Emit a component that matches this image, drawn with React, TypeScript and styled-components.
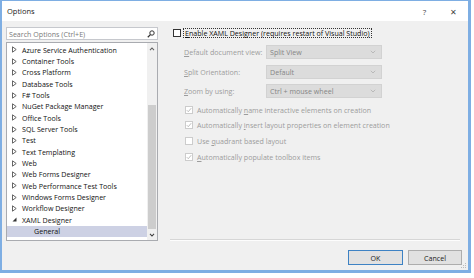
import React from "react";
import styled, { createGlobalStyle } from "styled-components";

const GlobalStyle = createGlobalStyle`
  html, body {
    margin: 0;
    padding: 0;
    background: #ffffff;
  }
  body {
    font-family: "Open Sans", "Noto Sans", "Liberation Sans", sans-serif;
    font-size: 7.1px;
    color: #111;
  }
`;

const Window = styled.div`
  box-sizing: border-box;
  width: 471px;
  height: 273px;
  border-style: solid;
  border-color: #7eaee3;
  border-width: 1px 3px 3px 2px;
  display: flex;
  flex-direction: column;
  position: relative;
`;

const TitleBar = styled.div`
  height: 20px;
  background: #ffffff;
  display: flex;
  align-items: center;
  padding-left: 5px;
  font-size: 7.5px;
  color: #222;
`;

const TitleText = styled.span`
  flex: 1;
`;

const TitleButton = styled.span`
  width: 29px;
  text-align: center;
  font-size: 8px;
  color: #444;
`;

const Body = styled.div`
  flex: 1;
  background: #f0f0f0;
  display: flex;
  flex-direction: column;
`;

const Main = styled.div`
  display: flex;
  padding: 6px 0 0 4px;
`;

const LeftPane = styled.div`
  width: 152px;
  display: flex;
  flex-direction: column;
  gap: 2px;
`;

const SearchBox = styled.div`
  box-sizing: border-box;
  height: 13px;
  background: #fff;
  border: 1px solid #c6c8cd;
  display: flex;
  align-items: center;
  padding: 0 2px 0 2px;
  color: #7a7a7a;
`;

const SearchPlaceholder = styled.span`
  flex: 1;
`;

const TreeBox = styled.div`
  box-sizing: border-box;
  height: 199px;
  background: #fff;
  border: 1px solid #a9abb0;
  display: flex;
`;

const TreeList = styled.div`
  flex: 1;
  padding-top: 1px;
`;

const TreeRow = styled.div<{ $selected?: boolean; $indent?: number }>`
  height: 11.35px;
  display: flex;
  align-items: center;
  padding-left: ${(p) => 5 + (p.$indent || 0) * 12}px;
  background: ${(p) => (p.$selected ? "#cdd1e4" : "transparent")};
  white-space: nowrap;
`;

const Expander = styled.span`
  width: 10px;
  display: flex;
  align-items: center;
`;

const ScrollBar = styled.div`
  width: 10px;
  background: #f0f0f0;
  display: flex;
  flex-direction: column;
  align-items: center;
`;

const ScrollArrow = styled.div`
  height: 11px;
  display: flex;
  align-items: center;
  justify-content: center;
`;

const ScrollTrack = styled.div`
  flex: 1;
  width: 100%;
  display: flex;
  flex-direction: column;
  padding-top: 51px;
  box-sizing: border-box;
`;

const ScrollThumb = styled.div`
  width: 8px;
  margin: 0 auto;
  height: 124px;
  background: #cdcdcd;
`;

const RightPane = styled.div`
  width: 290px;
  margin-left: 12px;
  height: 213px;
  border-bottom: 1px solid #d6d6d6;
  box-shadow: 0 1px 0 #fdfdfd;
  padding: 1px 0 0 3px;
  box-sizing: border-box;
`;

const EnableRow = styled.div`
  display: flex;
  align-items: center;
  height: 10px;
  gap: 2px;
`;

const FocusLabel = styled.span`
  border: 1px dotted #333;
  padding: 0 1px;
  height: 10px;
  box-sizing: border-box;
  display: flex;
  align-items: center;
  color: #111;
`;

const Settings = styled.div`
  padding-left: 11px;
  margin-top: 7px;
  display: flex;
  flex-direction: column;
`;

const FieldRow = styled.div`
  display: flex;
  align-items: center;
  height: 14px;
  margin-bottom: 5.5px;
`;

const FieldLabel = styled.span`
  width: 82px;
  color: #9c9c9c;
`;

const Select = styled.div`
  box-sizing: border-box;
  width: 116px;
  height: 14px;
  background: #dcdcdc;
  border: 1px solid #d2d2d2;
  display: flex;
  align-items: center;
  justify-content: space-between;
  padding: 0 5px 0 3px;
  color: #858585;
`;

const CheckRow = styled.div`
  display: flex;
  align-items: center;
  height: 12px;
  margin-bottom: 3.7px;
  padding-left: 1px;
  gap: 4px;
  color: #9c9c9c;
`;

const Box = styled.span<{ $disabled?: boolean }>`
  box-sizing: border-box;
  width: 8px;
  height: 8px;
  border: 1px solid ${(p) => (p.$disabled ? "#cccccc" : "#333333")};
  background: #fff;
  display: flex;
  align-items: center;
  justify-content: center;
`;

const U = styled.span`
  text-decoration: underline;
`;

const Footer = styled.div`
  display: flex;
  justify-content: flex-end;
  gap: 5px;
  padding: 9px 6px 0 0;
`;

const Button = styled.div<{ $default?: boolean }>`
  box-sizing: border-box;
  height: 15px;
  width: ${(p) => (p.$default ? 55 : 54)}px;
  background: #e1e1e1;
  border: 1px solid ${(p) => (p.$default ? "#3d82c4" : "#adadad")};
  display: flex;
  align-items: center;
  justify-content: center;
  color: #1a1a1a;
`;

const Grip = styled.div`
  position: absolute;
  right: 1px;
  bottom: 1px;
  display: flex;
`;

const treeItems = [
  "Azure Service Authentication",
  "Container Tools",
  "Cross Platform",
  "Database Tools",
  "F# Tools",
  "NuGet Package Manager",
  "Office Tools",
  "SQL Server Tools",
  "Test",
  "Text Templating",
  "Web",
  "Web Forms Designer",
  "Web Performance Test Tools",
  "Windows Forms Designer",
  "Workflow Designer",
];

const Collapsed = () => (
  <svg width="5" height="7" viewBox="0 0 5 7">
    <path d="M0.5 0.8 L4.2 3.5 L0.5 6.2 Z" fill="none" stroke="#555" strokeWidth="0.9" />
  </svg>
);

const Expanded = () => (
  <svg width="5" height="5" viewBox="0 0 5 5">
    <path d="M4.5 0.5 L4.5 4.5 L0.5 4.5 Z" fill="#333" />
  </svg>
);

const Check = () => (
  <svg width="6" height="6" viewBox="0 0 6 6">
    <path d="M0.8 3.2 L2.3 4.7 L5.2 1.2" fill="none" stroke="#b5b5b5" strokeWidth="0.9" />
  </svg>
);

const Chevron = ({ up }: { up?: boolean }) => (
  <svg width="6" height="4" viewBox="0 0 6 4">
    <path
      d={up ? "M1 3.2 L3 1 L5 3.2" : "M1 0.8 L3 3 L5 0.8"}
      fill="none"
      stroke={up ? "#606060" : "#404040"}
      strokeWidth="1.1"
    />
  </svg>
);

const DropArrow = () => (
  <svg width="6" height="4" viewBox="0 0 6 4">
    <path d="M0.8 0.8 L3 3 L5.2 0.8" fill="none" stroke="#b0b0b0" strokeWidth="0.8" />
  </svg>
);

const SearchIcon = () => (
  <svg width="8" height="8" viewBox="0 0 8 8">
    <circle cx="5" cy="3" r="2.2" fill="none" stroke="#333" strokeWidth="1" />
    <path d="M3.4 4.6 L0.8 7.2" stroke="#333" strokeWidth="1.3" />
  </svg>
);

const GripDots = () => (
  <svg width="6" height="6" viewBox="0 0 6 6">
    <rect x="4" y="0" width="1" height="1" fill="#bbb" />
    <rect x="2" y="2" width="1" height="1" fill="#bbb" />
    <rect x="4" y="2" width="1" height="1" fill="#bbb" />
    <rect x="0" y="4" width="1" height="1" fill="#bbb" />
    <rect x="2" y="4" width="1" height="1" fill="#bbb" />
    <rect x="4" y="4" width="1" height="1" fill="#bbb" />
  </svg>
);

export default function App() {
  return (
    <>
      <GlobalStyle />
      <Window>
        <TitleBar>
          <TitleText>Options</TitleText>
          <TitleButton>?</TitleButton>
          <TitleButton>✕</TitleButton>
        </TitleBar>
        <Body>
          <Main>
            <LeftPane>
              <SearchBox>
                <SearchPlaceholder>Search Options (Ctrl+E)</SearchPlaceholder>
                <SearchIcon />
              </SearchBox>
              <TreeBox>
                <TreeList>
                  {treeItems.map((item) => (
                    <TreeRow key={item}>
                      <Expander>
                        <Collapsed />
                      </Expander>
                      {item}
                    </TreeRow>
                  ))}
                  <TreeRow>
                    <Expander>
                      <Expanded />
                    </Expander>
                    XAML Designer
                  </TreeRow>
                  <TreeRow $selected $indent={1}>
                    <Expander />
                    General
                  </TreeRow>
                </TreeList>
                <ScrollBar>
                  <ScrollArrow>
                    <Chevron up />
                  </ScrollArrow>
                  <ScrollTrack>
                    <ScrollThumb />
                  </ScrollTrack>
                  <ScrollArrow>
                    <Chevron />
                  </ScrollArrow>
                </ScrollBar>
              </TreeBox>
            </LeftPane>
            <RightPane>
              <EnableRow>
                <Box />
                <FocusLabel>
                  <span>
                    <U>E</U>nable XAML Designer (requires restart of Visual Studio)
                  </span>
                </FocusLabel>
              </EnableRow>
              <Settings>
                <FieldRow>
                  <FieldLabel>
                    <U>D</U>efault document view:
                  </FieldLabel>
                  <Select>
                    Split View
                    <DropArrow />
                  </Select>
                </FieldRow>
                <FieldRow>
                  <FieldLabel>
                    <U>S</U>plit Orientation:
                  </FieldLabel>
                  <Select>
                    Default
                    <DropArrow />
                  </Select>
                </FieldRow>
                <FieldRow>
                  <FieldLabel>
                    <U>Z</U>oom by using:
                  </FieldLabel>
                  <Select>
                    Ctrl + mouse wheel
                    <DropArrow />
                  </Select>
                </FieldRow>
                <CheckRow>
                  <Box $disabled>
                    <Check />
                  </Box>
                  <span>
                    Automatically <U>n</U>ame interactive elements on creation
                  </span>
                </CheckRow>
                <CheckRow>
                  <Box $disabled>
                    <Check />
                  </Box>
                  <span>
                    Automatically <U>i</U>nsert layout properties on element creation
                  </span>
                </CheckRow>
                <CheckRow>
                  <Box $disabled />
                  <span>
                    Use <U>q</U>uadrant based layout
                  </span>
                </CheckRow>
                <CheckRow>
                  <Box $disabled>
                    <Check />
                  </Box>
                  <span>
                    <U>A</U>utomatically populate toolbox items
                  </span>
                </CheckRow>
              </Settings>
            </RightPane>
          </Main>
          <Footer>
            <Button $default>OK</Button>
            <Button>Cancel</Button>
          </Footer>
        </Body>
        <Grip>
          <GripDots />
        </Grip>
      </Window>
    </>
  );
}
